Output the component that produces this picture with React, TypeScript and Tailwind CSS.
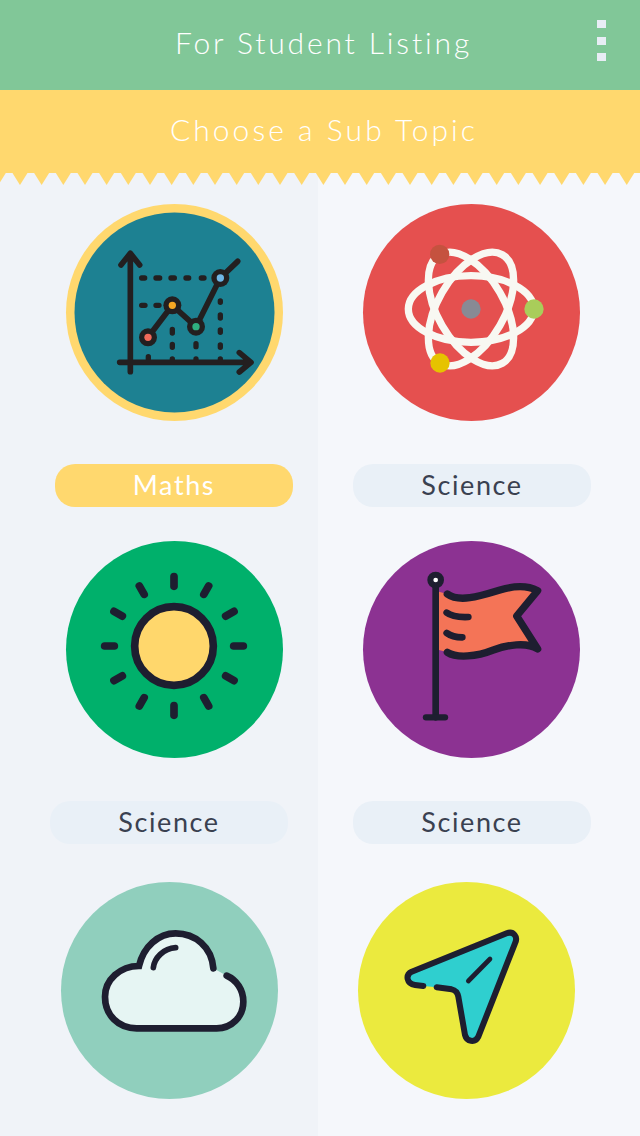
import type { ReactNode } from "react";

const ink = "#1e1e30";
const zigzagTips = Array.from({ length: 31 }, (_, i) => -1.7 + i * 21.67);

function Bubble({ color, margin, children }: { color: string; margin: string; children: ReactNode }) {
  return (
    <div className={`h-[217px] w-[217px] shrink-0 rounded-full ${margin}`} style={{ backgroundColor: color }}>
      {children}
    </div>
  );
}

function Pill({ label, active, margin }: { label: string; active?: boolean; margin: string }) {
  return (
    <div
      className={`flex h-[43px] w-[238px] shrink-0 items-center justify-center rounded-[20px] text-[27px] tracking-[1.6px] ${margin} ${
        active ? "bg-[#ffd86e] text-white" : "bg-[#e9f0f7] text-[#3a4150]"
      }`}
    >
      {label}
    </div>
  );
}

function ChartIcon() {
  const dots: [number, number, string][] = [
    [264, 412, "#f0695a"],
    [337, 316, "#f5a623"],
    [408, 380, "#2fae7f"],
    [481, 234, "#6fb7e6"],
  ];
  return (
    <svg viewBox="18 12 651 651" className="block h-full w-full" fill="none" stroke="#231f20" strokeLinecap="round" strokeLinejoin="round" strokeWidth="17">
      <circle cx="343.5" cy="337.5" r="300" fill="#1d8192" stroke="none" />
      <path d="M245 234h9M288 234h11M333 234h10M378 234h8M424 234h8M245 316h10M288 316h9" strokeWidth="16" />
      <path d="M481 303v4M481 345v9M481 390v7M481 435v7M481 477v3M337 388v11M337 433v9M337 477v3M408 431v9M408 477v3M265 470v8" strokeWidth="16" />
      <path d="M211 515V162M183 195l28-35 28 35M179 487h392M538 458l35 29-35 29" />
      <path d="M264 412L337 316L408 380L481 234L533 184" />
      {dots.map(([x, y, c]) => (
        <g key={x}>
          <circle cx={x} cy={y} r="27" fill="#231f20" stroke="none" />
          <circle cx={x} cy={y} r="11" fill={c} stroke="none" />
        </g>
      ))}
    </svg>
  );
}

function AtomIcon() {
  return (
    <svg viewBox="9 12 651 651" className="block h-full w-full" fill="none" stroke="#f8f8f2" strokeWidth="22">
      <ellipse cx="333" cy="327" rx="188" ry="100" />
      <ellipse cx="333" cy="327" rx="188" ry="100" transform="rotate(60 333 327)" />
      <ellipse cx="333" cy="327" rx="188" ry="100" transform="rotate(-60 333 327)" />
      <circle cx="239" cy="163" r="29" fill="#c5523f" stroke="none" />
      <circle cx="522" cy="327" r="29" fill="#a9cd5a" stroke="none" />
      <circle cx="240" cy="489" r="29" fill="#e6c300" stroke="none" />
      <circle cx="333" cy="327" r="29" fill="#888a94" stroke="none" />
    </svg>
  );
}

function SunIcon() {
  const angles = [0, 30, 60, 90, 120, 150, 180, 210, 240, 270, 300, 330];
  return (
    <svg viewBox="18 3 651 651" className="block h-full w-full" fill="none" stroke={ink} strokeWidth="23" strokeLinecap="round">
      <circle cx="342" cy="318" r="118" fill="#ffd76c" />
      {angles.map((a) => (
        <line key={a} x1="342" y1="110" x2="342" y2="139" transform={`rotate(${a} 342 318)`} />
      ))}
    </svg>
  );
}

function FlagIcon() {
  return (
    <svg viewBox="9 3 651 651" className="block h-full w-full" fill="none" stroke={ink} strokeLinecap="round" strokeLinejoin="round">
      <path d="M237 155L262 162C300 190 370 165 420 150C470 135 510 140 533 152L470 228L533 327C500 305 440 315 400 330C350 350 290 355 262 337L237 330Z" fill="#f47457" stroke="none" />
      <path d="M262 162C300 190 370 165 420 150C470 135 510 140 533 152L470 228L533 327C500 305 440 315 400 330C350 350 290 355 262 337" strokeWidth="22" />
      <path d="M260 218C275 230 300 232 325 231M260 279C272 288 290 292 307 292" strokeWidth="20" />
      <path d="M227 120V532" strokeWidth="20" />
      <path d="M198 532H255" strokeWidth="19" />
      <circle cx="227" cy="120" r="25" fill={ink} stroke="none" />
      <circle cx="227" cy="120" r="7" fill="#fff" stroke="none" />
    </svg>
  );
}

function CloudIcon() {
  const outline =
    "M475 265C470 200 420 160 362 160C310 160 265 200 252 258C195 258 150 300 150 350C150 405 190 445 245 445L485 445C530 445 565 410 565 365C565 330 545 300 515 287";
  return (
    <svg viewBox="18 6 651 651" className="block h-full w-full" fill="none" stroke={ink} strokeLinecap="round">
      <path d={outline} fill="#e6f5f3" stroke="none" />
      <path d={outline} strokeWidth="20" />
      <path d="M295 263C298 235 325 205 362 203" strokeWidth="17" />
    </svg>
  );
}

function PlaneIcon() {
  const outline =
    "M205 318L180 315C155 312 150 285 170 275L455 160C475 152 490 170 480 190L370 470C360 490 335 485 330 465L310 350C307 335 300 330 290 328L245 322";
  return (
    <svg viewBox="9 6 651 651" className="block h-full w-full" fill="none" stroke={ink} strokeLinecap="round" strokeLinejoin="round">
      <path d={outline} fill="#2fcfcf" stroke="none" />
      <path d={outline} strokeWidth="18" />
      <path d="M340 303L405 237" strokeWidth="14" />
    </svg>
  );
}

export default function App() {
  return (
    <div className="flex h-[1136px] w-[640px] flex-col overflow-hidden bg-[#f5f7fb] font-['Lato',sans-serif]">
      <header className="flex h-[90px] shrink-0 items-center justify-between bg-[#81c798] pl-[175px] pr-[34px]">
        <h1 className="pb-[6px] text-[30px] font-light tracking-[2.85px] text-white">For Student Listing</h1>
        <div className="mb-[9px] flex flex-col gap-[8.5px]">
          <span className="h-[8px] w-[9px] bg-[#e8edf5]" />
          <span className="h-[8px] w-[9px] bg-[#e8edf5]" />
          <span className="h-[8px] w-[9px] bg-[#e8edf5]" />
        </div>
      </header>

      <div className="flex h-[83px] shrink-0 items-center justify-center bg-[#ffd86e] pb-[4px] pl-[8px]">
        <h2 className="text-[30px] font-light tracking-[3.05px] text-white">Choose a Sub Topic</h2>
      </div>

      <main className="relative flex flex-1">
        <svg className="absolute left-0 top-0" width="640" height="13" viewBox="0 0 640 13" fill="#ffd86e">
          {zigzagTips.map((x) => (
            <polygon key={x} points={`${x - 7.5},0 ${x},12 ${x + 7.5},0`} />
          ))}
        </svg>

        <section className="flex w-[318px] flex-col bg-[#f0f3f8] pt-[31px]">
          <Bubble color="#ffd86e" margin="ml-[66px]">
            <ChartIcon />
          </Bubble>
          <Pill label="Maths" active margin="ml-[55px] mt-[43px]" />
          <Bubble color="#00b06b" margin="ml-[66px] mt-[34px]">
            <SunIcon />
          </Bubble>
          <Pill label="Science" margin="ml-[50px] mt-[43px]" />
          <Bubble color="#90cfbd" margin="ml-[61px] mt-[38px]">
            <CloudIcon />
          </Bubble>
        </section>

        <section className="flex flex-1 flex-col pt-[31px]">
          <Bubble color="#e5504f" margin="ml-[45px]">
            <AtomIcon />
          </Bubble>
          <Pill label="Science" margin="ml-[35px] mt-[43px]" />
          <Bubble color="#8c3292" margin="ml-[45px] mt-[34px]">
            <FlagIcon />
          </Bubble>
          <Pill label="Science" margin="ml-[35px] mt-[43px]" />
          <Bubble color="#ebea3e" margin="ml-[40px] mt-[38px]">
            <PlaneIcon />
          </Bubble>
        </section>
      </main>
    </div>
  );
}
